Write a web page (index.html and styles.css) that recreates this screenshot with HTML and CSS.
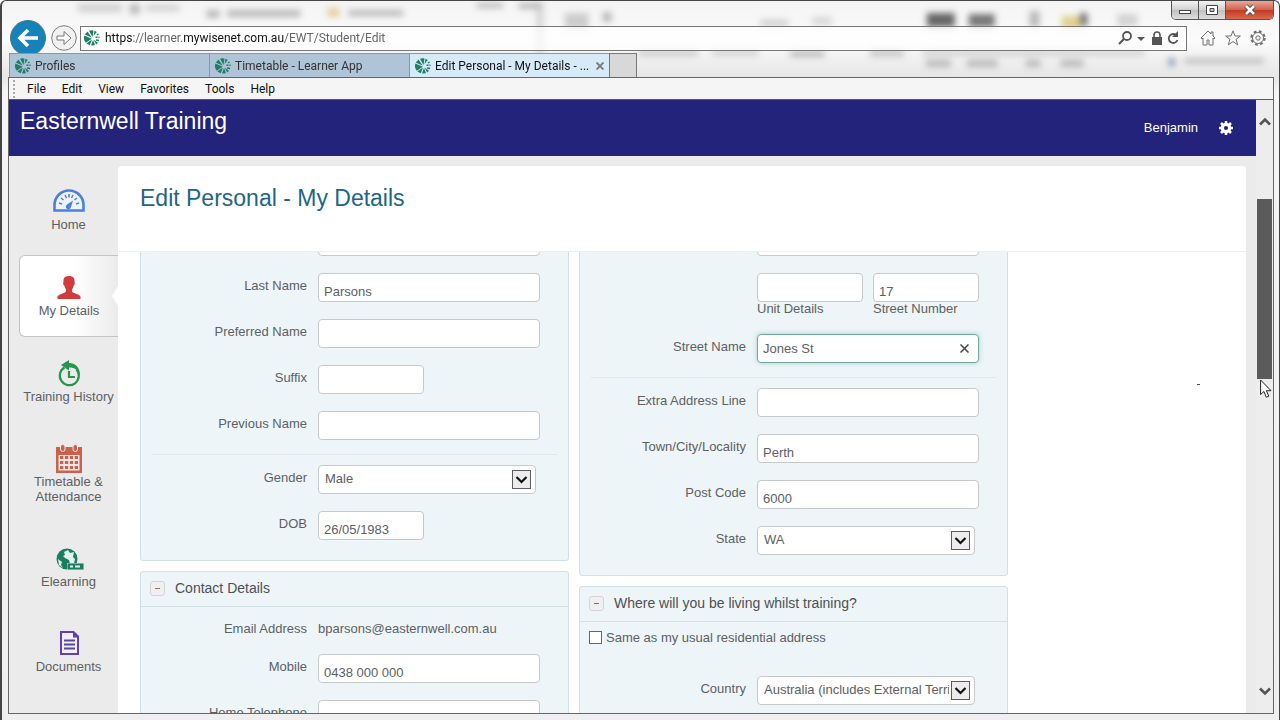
FILE: index.html
```html
<!DOCTYPE html>
<html lang="en">
    <head>
        <meta charset="UTF-8" />
        <meta name="viewport" content="width=device-width, initial-scale=1" />
        <title>Edit Personal - My Details - Learner App</title>
        <link rel="stylesheet" href="styles.css">
    </head>
    <body>
        <!-- Shared symbols -->
        <svg class="symbols" aria-hidden="true">
            <symbol id="favicon" viewBox="0 0 16 16">
                <path d="M5 .8A7.500 7.500 0 0 1 9.500.5L8.500 7zM3.500 1.500L7.800 7.800.8 4.500zM.4 5.500l7.400 3.200-6 4A7.500 7.500 0 0 1 .4 5.500zM2.300 13.500L8 9.500 5.800 15.300zM7 15.600L9 10l2 5.300zM12.200 14.600L9.500 9.500l4.500 3.300zM10.500 .8L9.500 6l3.300-4z" fill="#1d7f66" />
                <path d="M13 5l1.500-1M11.500 7.300h2M14.500 7.500l1-.5M12 10l3 .5" stroke="#1d7f66" stroke-width="1.500" />
            </symbol>
            <symbol id="chevron" viewBox="0 0 19 19">
                <rect x="0.500" y="0.500" width="18" height="18" fill="#ececec" stroke="#5c5c5c" />
                <path d="M4.500 7l5 5 5-5" fill="none" stroke="#111" stroke-width="2.200" />
            </symbol>
        </svg>

        <div class="window">
            <!-- Blurred desktop behind the glass frame -->
            <svg class="glass" viewBox="0 0 1280 77" preserveAspectRatio="none" aria-hidden="true">
                <defs>
                    <filter id="soft" x="-20%" y="-20%" width="140%" height="140%">
                        <feGaussianBlur stdDeviation="3" />
                    </filter>
                </defs>
                <g filter="url(#soft)" fill="#b9b9b9">
                    <rect x="76" y="3" width="44" height="8" opacity="0.600" />
                    <rect x="128" y="3" width="10" height="10" />
                    <rect x="144" y="4" width="34" height="6" opacity="0.600" />
                    <rect x="205" y="9" width="13" height="8" />
                    <rect x="226" y="9" width="73" height="7" />
                    <rect x="326" y="7" width="12" height="9" fill="#e5cfa0" />
                    <rect x="347" y="9" width="55" height="6" />
                    <rect x="476" y="2" width="26" height="5" />
                    <rect x="518" y="2" width="22" height="6" />
                    <rect x="535" y="0" width="8" height="52" opacity="0.500" />
                    <rect x="564" y="12" width="24" height="16" opacity="0.700" />
                    <rect x="602" y="11" width="9" height="10" />
                    <rect x="760" y="19" width="28" height="6" opacity="0.700" />
                    <rect x="812" y="16" width="20" height="8" opacity="0.500" />
                    <rect x="638" y="49" width="60" height="6" opacity="0.700" />
                    <rect x="712" y="49" width="46" height="5" opacity="0.700" />
                    <rect x="790" y="50" width="34" height="6" />
                    <rect x="870" y="48" width="34" height="8" opacity="0.700" />
                    <rect x="927" y="12" width="28" height="14" fill="#666" />
                    <rect x="969" y="13" width="26" height="13" fill="#777" />
                    <rect x="1030" y="10" width="10" height="16" />
                    <rect x="1062" y="15" width="20" height="13" fill="#ded28d" />
                    <rect x="1080" y="12" width="8" height="13" fill="#777" />
                    <rect x="1118" y="13" width="20" height="12" opacity="0.600" />
                    <rect x="923" y="50" width="222" height="4" opacity="0.800" />
                    <rect x="926" y="59" width="25" height="7" />
                    <rect x="967" y="59" width="31" height="7" />
                    <rect x="1026" y="59" width="15" height="7" />
                    <rect x="1061" y="59" width="23" height="7" />
                    <rect x="1169" y="57" width="7" height="8" fill="#8fa3bd" />
                    <rect x="1185" y="57" width="80" height="6" opacity="0.800" />
                </g>
            </svg>

            <div class="window-buttons">
                <button type="button" aria-label="Minimize">
                    <svg viewBox="0 0 16 12" width="16" height="12"><rect x="2.500" y="6.500" width="11" height="3" fill="#fff" stroke="#444" /></svg>
                </button>
                <button type="button" aria-label="Restore">
                    <svg viewBox="0 0 16 12" width="16" height="12"><path d="M2.500 1.500h11v9h-11zM6 4.500h4v3H6z" fill="#fff" fill-rule="evenodd" stroke="#444" /></svg>
                </button>
                <button type="button" class="close" aria-label="Close">
                    <svg viewBox="0 0 16 12" width="16" height="12"><path d="M4 2l8 8M12 2l-8 8" stroke="#444" stroke-width="4.500" /><path d="M4 2l8 8M12 2l-8 8" stroke="#fff" stroke-width="2.600" /></svg>
                </button>
            </div>

            <div class="nav-row">
                <button type="button" class="back" aria-label="Back">
                    <svg viewBox="0 0 36 36" width="36" height="36"><circle cx="18" cy="18" r="17.500" fill="#1682b8" stroke="#4b7890" /><path d="M28 18H11M18 10l-8 8 8 8" fill="none" stroke="#fff" stroke-width="3.600" /></svg>
                </button>
                <button type="button" class="forward" aria-label="Forward">
                    <svg viewBox="0 0 26 26" width="26" height="26"><circle cx="13" cy="13" r="12.300" fill="#f1f1f1" stroke="#7b7b7b" /><path d="M6 11h7V6.500l7 6.500-7 6.500V15H6z" fill="#fafafa" stroke="#777" /></svg>
                </button>
                <div class="address">
                    <svg width="16" height="16"><use href="#favicon" /></svg>
                    <div class="url" role="textbox" aria-label="Address"><b>https</b>://learner.<b>mywisenet.com.au</b>/EWT/Student/Edit</div>
                    <svg viewBox="0 0 62 16" width="62" height="16" fill="none" stroke="#555">
                        <circle cx="9" cy="6" r="4" stroke-width="1.800" />
                        <path d="M6 9l-5 5" stroke-width="2.200" />
                        <path d="M19 7h8l-4 4z" fill="#555" stroke="none" />
                        <path d="M34 7h10v8H34z" fill="#555" stroke="none" />
                        <path d="M36 8V5a3 3 0 0 1 6 0v3" stroke-width="1.600" />
                        <path d="M59 6a4.500 4.500 0 1 0 .5 4" stroke-width="1.800" />
                        <path d="M60 1v6h-6z" fill="#555" stroke="none" />
                    </svg>
                </div>
                <div class="tools">
                    <button type="button" aria-label="Home">
                        <svg viewBox="0 0 16 16" width="16" height="16"><path d="M1 8l7-7 3 3V2h2v4l2 2-1 1-1-1v7h-4v-5H7v5H3V8L2 9z" fill="#fafafa" stroke="#707070" /></svg>
                    </button>
                    <button type="button" aria-label="Favorites">
                        <svg viewBox="0 0 16 16" width="16" height="16"><path d="M8 .8l2 5.200h5.400l-4.300 3.300 1.600 5.500L8 11.600l-4.700 3.200 1.600-5.500L.6 6H6z" fill="#fafafa" stroke="#707070" /></svg>
                    </button>
                    <button type="button" aria-label="Settings">
                        <svg viewBox="0 0 16 16" width="16" height="16"><circle cx="8" cy="8" r="6.200" fill="none" stroke="#707070" stroke-width="3" stroke-dasharray="2.600 2.270" /><circle cx="8" cy="8" r="5.500" fill="#fafafa" stroke="#707070" /><circle cx="8" cy="8" r="2.200" fill="#eee" stroke="#707070" /></svg>
                    </button>
                </div>
            </div>

            <div class="tabs">
                <a href="#" class="tab"><svg width="16" height="16"><use href="#favicon" /></svg><span>Profiles</span></a>
                <a href="#" class="tab"><svg width="16" height="16"><use href="#favicon" /></svg><span>Timetable - Learner App</span></a>
                <a href="#" class="tab current">
                    <svg width="16" height="16"><use href="#favicon" /></svg><span>Edit Personal - My Details - ...</span>
                    <svg class="tab-close" viewBox="0 0 8 8" width="8" height="8"><path d="M.5 .5l7 7M7.500 .5l-7 7" stroke="#777" stroke-width="1.800" /></svg>
                </a>
                <button type="button" class="new-tab" aria-label="New tab"></button>
            </div>

            <div class="frame">
                <div class="menubar">
                    <a href="#">File</a>
                    <a href="#">Edit</a>
                    <a href="#">View</a>
                    <a href="#">Favorites</a>
                    <a href="#">Tools</a>
                    <a href="#">Help</a>
                </div>

                <div class="viewport">
                    <div class="page">
                        <header class="app-header">
                            <div class="brand">Easternwell Training</div>
                            <a href="#" class="user">Benjamin</a>
                            <button type="button" aria-label="Settings">
                                <svg viewBox="0 0 14 14" width="14" height="14"><circle cx="7" cy="7" r="3.700" fill="none" stroke="#fff" stroke-width="3.200" /><path d="M7 0v3M7 11v3M0 7h3M11 7h3M2 2l2 2M10 10l2 2M12 2l-2 2M4 10l-2 2" stroke="#fff" stroke-width="2.600" /></svg>
                            </button>
                        </header>

                        <div class="app-body">
                            <nav class="sidebar">
                                <a href="#" class="side-item">
                                    <svg viewBox="0 0 32 32" width="32" height="32"><path d="M1.500 25.500v-5.500a14.500 14.500 0 0 1 29 0v5.500z" fill="#edf2fb" stroke="#4b80dd" stroke-width="2.600" /><path d="M6 18l3 1M8 13l2.500 2M12 10l1.500 3M16 9v3.500M20 10l-1.500 3M24 13l-2.500 2M26 18l-3 1" stroke="#4b80dd" stroke-width="1.500" /><path d="M20 15.500l-2 6.500a2.600 2.600 0 1 1-4-2.500z" fill="#4b80dd" /></svg>
                                    Home
                                </a>
                                <a href="#" class="side-item active">
                                    <svg viewBox="0 0 32 32" width="32" height="32"><path d="M16 5c4 0 6 2 5.500 6 1 1 0 3-.8 3.500-.3 2-1.200 3-1.700 4v2c1 2 8.500 2.500 8.500 5.500v2h-23v-2C4.500 23 12 22.500 13 20.500v-2c-.5-1-1.400-2-1.700-4-.8-.5-1.800-2.500-.8-3.500C10 7 12 5 16 5z" fill="#d23b3e" /></svg>
                                    My Details
                                </a>
                                <a href="#" class="side-item">
                                    <svg viewBox="0 0 32 32" width="32" height="32" fill="none" stroke="#27964a"><path d="M11.500 10.500a9.500 9.500 0 1 0 12 2" stroke-width="2.200" /><path d="M8 8l8-5v3c6 0 11 4 11 12-2-5-5-7.500-11-7.500v3z" fill="#27964a" stroke="none" /><path d="M16 14v6h6" stroke-width="2.200" /></svg>
                                    Training History
                                </a>
                                <a href="#" class="side-item">
                                    <svg viewBox="0 0 32 32" width="32" height="32"><path d="M3 5h26v26H3z" fill="#c8624f" /><path d="M5.500 13h21v15.500h-21z" fill="#f0e9e7" /><path d="M7 15.500h18M7 20.500h18M7 25.500h18" stroke="#c8624f" stroke-width="3.200" stroke-dasharray="3.300 1.600" /><g fill="#c8624f" stroke="#ebebeb"><rect x="7.500" y="2.500" width="4.500" height="7" rx="2.200" /><rect x="20" y="2.500" width="4.500" height="7" rx="2.200" /></g></svg>
                                    Timetable &amp;<br>Attendance
                                </a>
                                <a href="#" class="side-item">
                                    <svg viewBox="0 0 32 32" width="32" height="32"><circle cx="14" cy="17" r="10.500" fill="#187e5f" /><path d="M11 10l4-2 2 3 4-1-1 5 2 2-1 5h-4l-1-4-4-2-2-2 2-1zM5 17l4 3-1 3 2 3-4-3z" fill="#e5efeb" /><rect x="14" y="21" width="17" height="7" fill="#ebebeb" /><rect x="15.200" y="22.200" width="14.600" height="4.600" fill="#187e5f" stroke="#187e5f" stroke-width="1.500" /><path d="M17 24.500h3M22 24.500h5" stroke="#e5efeb" stroke-width="2" /></svg>
                                    Elearning
                                </a>
                                <a href="#" class="side-item">
                                    <svg viewBox="0 0 32 32" width="32" height="32"><path d="M8 5h12.500l4.500 4.500V27H8z" fill="#f1eff6" stroke="#633fb0" stroke-width="2" /><path d="M20 4.500v6h6z" fill="#633fb0" /><path d="M11 13.500h11M11 17.500h11M11 21.500h11" stroke="#59469a" stroke-width="1.800" /></svg>
                                    Documents
                                </a>
                            </nav>

                            <main class="content">
                                <div class="content-header">
                                    <h1>Edit Personal - My Details</h1>
                                </div>
                                <form class="form-scroll">
                                    <div class="form-columns">
                                        <div class="column">
                                            <section class="panel">
                                                <div class="rows">
                                                    <div class="row"><span></span><input type="text" aria-label="Middle Name" /></div>
                                                    <div class="row"><label for="lastName">Last Name</label><input type="text" id="lastName" value="Parsons" /></div>
                                                    <div class="row"><label for="preferredName">Preferred Name</label><input type="text" id="preferredName" /></div>
                                                    <div class="row"><label for="suffix">Suffix</label><input type="text" id="suffix" class="short" /></div>
                                                    <div class="row"><label for="previousName">Previous Name</label><input type="text" id="previousName" /></div>
                                                </div>
                                                <div class="rows divided">
                                                    <div class="row">
                                                        <label for="gender">Gender</label>
                                                        <div class="select"><select id="gender"><option>Male</option></select><svg width="19" height="19"><use href="#chevron" /></svg></div>
                                                    </div>
                                                    <div class="row"><label for="dob">DOB</label><input type="text" id="dob" class="short" value="26/05/1983" /></div>
                                                </div>
                                            </section>
                                            <section class="panel">
                                                <h2><button type="button" class="toggle" aria-label="Collapse"></button>Contact Details</h2>
                                                <div class="rows">
                                                    <div class="row text-row"><span class="label">Email Address</span><span class="value">bparsons@easternwell.com.au</span></div>
                                                    <div class="row"><label for="mobile">Mobile</label><input type="text" id="mobile" value="0438 000 000" /></div>
                                                    <div class="row"><label for="homePhone">Home Telephone</label><input type="text" id="homePhone" /></div>
                                                </div>
                                            </section>
                                        </div>

                                        <div class="column">
                                            <section class="panel">
                                                <div class="rows">
                                                    <div class="row"><span></span><input type="text" aria-label="Building Name" /></div>
                                                    <div class="row">
                                                        <span></span>
                                                        <div class="pair">
                                                            <div><input type="text" id="unit" class="short" /><label for="unit">Unit Details</label></div>
                                                            <div><input type="text" id="streetNumber" class="short" value="17" /><label for="streetNumber">Street Number</label></div>
                                                        </div>
                                                    </div>
                                                    <div class="row">
                                                        <label for="streetName">Street Name</label>
                                                        <div class="focused">
                                                            <input type="text" id="streetName" value="Jones St" />
                                                            <button type="button" aria-label="Clear"><svg viewBox="0 0 9 9" width="9" height="9"><path d="M.5 .5l8 8M8.500 .5l-8 8" stroke="#444" stroke-width="1.500" /></svg></button>
                                                        </div>
                                                    </div>
                                                </div>
                                                <div class="rows divided">
                                                    <div class="row"><label for="extraAddress">Extra Address Line</label><input type="text" id="extraAddress" /></div>
                                                    <div class="row"><label for="town">Town/City/Locality</label><input type="text" id="town" value="Perth" /></div>
                                                    <div class="row"><label for="postCode">Post Code</label><input type="text" id="postCode" value="6000" /></div>
                                                    <div class="row">
                                                        <label for="state">State</label>
                                                        <div class="select"><select id="state"><option>WA</option></select><svg width="19" height="19"><use href="#chevron" /></svg></div>
                                                    </div>
                                                </div>
                                            </section>
                                            <section class="panel">
                                                <h2><button type="button" class="toggle" aria-label="Collapse"></button>Where will you be living whilst training?</h2>
                                                <div class="check-row">
                                                    <input type="checkbox" id="sameAddress" />
                                                    <label for="sameAddress">Same as my usual residential address</label>
                                                </div>
                                                <div class="rows">
                                                    <div class="row">
                                                        <label for="country">Country</label>
                                                        <div class="select"><select id="country"><option>Australia (includes External Territories)</option></select><svg width="19" height="19"><use href="#chevron" /></svg></div>
                                                    </div>
                                                </div>
                                            </section>
                                        </div>
                                    </div>
                                </form>
                                <span class="speck"></span>
                            </main>
                        </div>
                    </div>

                    <div class="scrollbar">
                        <svg viewBox="0 0 12 9" width="12" height="9"><path d="M1 7.500l5-5 5 5" fill="none" stroke="#555" stroke-width="2.600" /></svg>
                        <div class="track">
                            <div class="thumb">
                                <svg class="cursor" viewBox="0 0 12 20" width="12" height="20"><path d="M.6 1v14.500l3.300-3 2.400 5.700 2.500-1-2.400-5.500h4.600z" fill="#fff" stroke="#222" /></svg>
                            </div>
                        </div>
                        <svg viewBox="0 0 12 9" width="12" height="9"><path d="M1 1.500l5 5 5-5" fill="none" stroke="#555" stroke-width="2.600" /></svg>
                    </div>
                </div>
            </div>
        </div>
    </body>
</html>
```
FILE: styles.css
```css
* {
    box-sizing: border-box;
    margin: 0;
    padding: 0;
}
body {
    font-family: "Liberation Sans", Arial, sans-serif;
    font-size: 13px;
    line-height: 15px;
    color: #5d6063;
    overflow: hidden;
}
a {
    color: inherit;
    text-decoration: none;
}
button {
    border: none;
    background: none;
    cursor: pointer;
}
svg {
    display: block;
    flex: none;
}
.symbols {
    position: absolute;
    width: 0;
    height: 0;
}

/* Browser window */
.window {
    position: relative;
    display: flex;
    flex-direction: column;
    height: 100vh;
    padding: 0 5px 6px 6px;
    border: 1px solid #444;
    border-width: 1px 1px 0 2px;
    border-radius: 6px 6px 0 0;
    background: linear-gradient(#f4f4f4, #fbfbfb 40px, #e6e6e6 76px, #f5f5f5 90px, #efefef);
}
.glass {
    position: absolute;
    top: 0;
    left: 0;
    width: 100%;
    height: 77px;
}
.window-buttons {
    position: absolute;
    top: 0;
    right: 5px;
    display: flex;
    border: 1px solid #555;
    border-top: none;
    border-radius: 0 0 5px 5px;
    overflow: hidden;
}
.window-buttons button {
    display: flex;
    align-items: center;
    justify-content: center;
    width: 27px;
    height: 18px;
    border-right: 1px solid #555;
    background: linear-gradient(#f3f3f3, #cfcfcf 50%, #c0c0c0 50%, #dedede);
}
.window-buttons .close {
    width: 47px;
    border: none;
    background: linear-gradient(#e9a699, #d1604c 50%, #c03a22 50%, #d9684f);
}
.nav-row {
    position: relative;
    display: flex;
    align-items: center;
    height: 36px;
    margin-top: 19px;
    padding-left: 2px;
}
.forward {
    margin: 0 3px 0 5px;
}
.address {
    flex: 1;
    display: flex;
    align-items: center;
    gap: 5px;
    height: 25px;
    padding: 0 6px 0 3px;
    border: 1px solid #777;
    background: rgba(255, 255, 255, 0.7);
}
.url,
.tabs,
.menubar {
    font: 12px/16px Roboto, "Noto Sans", sans-serif;
}
.url {
    flex: 1;
    color: #666;
}
.url b {
    font-weight: 400;
    color: #111;
}
.tools {
    display: flex;
    gap: 9px;
    margin: 0 8px 0 13px;
}
.tabs {
    position: relative;
    display: flex;
    height: 24px;
    margin: -3px 0 0 1px;
    color: #333;
}
.tab {
    display: flex;
    align-items: center;
    gap: 4px;
    width: 200px;
    padding: 0 5px;
    border: 1px solid #8b97a1;
    border-width: 1px 0 0 1px;
    background: #afc4d6;
    white-space: nowrap;
}
.tab.current {
    background: #d7eaf8;
    color: #111;
}
.tab-close {
    margin-left: auto;
}
.new-tab {
    width: 28px;
    border: 1px solid #777;
    border-bottom: none;
    background: #d8d8d8;
}
.frame {
    flex: 1;
    display: flex;
    flex-direction: column;
    min-height: 0;
    position: relative;
    border: 1px solid #666;
}
.menubar {
    display: flex;
    align-items: center;
    gap: 16px;
    height: 22px;
    padding-left: 4px;
    border-bottom: 1px solid #55576a;
    background: #f5f5f5;
    color: #111;
}
.menubar::before {
    content: "";
    height: 18px;
    margin-right: -4px;
    border-left: 2px dotted #aaa;
}
.viewport {
    flex: 1;
    display: flex;
    min-height: 0;
}
.page {
    flex: 1;
    display: flex;
    flex-direction: column;
    min-width: 0;
}

/* App header */
.app-header {
    display: flex;
    align-items: center;
    flex: none;
    height: 56px;
    padding: 0 23px 1px 11px;
    background: #24237b;
    color: #fff;
}
.brand {
    align-self: flex-start;
    margin-right: auto;
    padding-top: 7px;
    font-size: 23px;
    line-height: 28px;
}
.user {
    margin-right: 21px;
}

/* Sidebar */
.app-body {
    flex: 1;
    display: flex;
    min-height: 0;
    padding-right: 10px;
    background: #ebebeb;
}
.sidebar {
    display: flex;
    flex-direction: column;
    gap: 5px;
    flex: none;
    width: 109px;
    padding: 14px 0 0 10px;
    text-align: center;
}
.side-item {
    position: relative;
    padding: 15px 0 18px;
    white-space: nowrap;
}
.side-item svg {
    margin: 0 auto;
}
.side-item.active {
    border: 1px solid #c4c4c4;
    border-right: none;
    border-radius: 6px 0 0 6px;
    background: linear-gradient(to right, #fff 55%, #ebebeb);
}
.side-item.active::after {
    content: "";
    position: absolute;
    top: 30px;
    right: 0;
    border: 10px solid transparent;
    border-width: 10px 6px 10px 0;
    border-right-color: #fff;
}

/* Main content */
.content {
    position: relative;
    flex: 1;
    display: flex;
    flex-direction: column;
    min-width: 0;
    margin-top: 10px;
    border-radius: 4px 4px 0 0;
    background: #fff;
}
.content-header {
    flex: none;
    height: 86px;
    padding: 18px 22px 0;
    border-bottom: 1px solid #efefef;
}
h1 {
    font-size: 23px;
    font-weight: 400;
    line-height: 28px;
    color: #1f6686;
}
.form-scroll {
    flex: 1;
    overflow: hidden;
    padding-left: 22px;
}
.form-columns {
    display: flex;
    gap: 10px;
    margin-top: -36px; /* scrolled part of the form */
}
.column {
    display: flex;
    flex-direction: column;
    gap: 10px;
    width: 429px;
}
.panel {
    padding-bottom: 20px;
    border: 1px solid #cfe0e6;
    border-radius: 3px;
    background: #edf5f9;
}
h2 {
    display: flex;
    align-items: center;
    gap: 10px;
    height: 35px;
    padding: 0 9px 1px;
    border-bottom: 1px solid #d3e1e7;
    font-size: 14px;
    font-weight: 400;
    color: #4d5053;
}
.toggle {
    width: 15px;
    height: 15px;
    border: 1px solid #d5d5d5;
    border-radius: 3px;
    background: #f1efef;
}
.toggle::before {
    content: "";
    display: block;
    width: 5px;
    height: 1px;
    margin: 0 auto;
    background: #8a7575;
}
.rows {
    display: flex;
    flex-direction: column;
    gap: 17px;
    padding-top: 10px;
}
.rows.divided {
    margin: 14px 11px 0;
    border-top: 1px solid #dce9ee;
}
.row {
    display: grid;
    grid-template-columns: 166px 1fr;
    column-gap: 11px;
    align-items: start;
}
.divided .row {
    grid-template-columns: 155px 1fr;
}
.row > label {
    padding-top: 5px;
    text-align: right;
}
.text-row {
    height: 20px;
    padding-top: 4px;
}
.label {
    text-align: right;
}
input[type="text"],
select {
    display: block;
    width: 222px;
    height: 29px;
    padding: 8px 5px 0;
    border: 1px solid #c6c9cc;
    border-radius: 4px;
    background: #fff;
    color: #5d6063;
    font: 13px "Liberation Sans", Arial, sans-serif;
    outline: none;
}
input.short {
    width: 106px;
}
.select {
    position: relative;
    width: 218px;
}
.select select {
    width: 100%;
    padding: 0 25px 2px 6px;
    appearance: none;
}
.select svg {
    position: absolute;
    top: 5px;
    right: 5px;
    pointer-events: none;
}
.pair {
    display: flex;
    gap: 10px;
    height: 44px;
}
.pair label {
    display: block;
    line-height: 14px;
}
.focused {
    position: relative;
    width: 222px;
}
.focused input[type="text"] {
    padding: 0 24px 0 5px;
    border-color: #6fa99a;
    box-shadow: 0 0 5px rgba(70, 150, 125, 0.4);
}
.focused button {
    position: absolute;
    top: 10px;
    right: 10px;
}
.check-row {
    display: flex;
    align-items: center;
    gap: 4px;
    height: 44px;
    padding: 0 0 14px 9px;
}
input[type="checkbox"] {
    width: 13px;
    height: 13px;
    border: 1px solid #666;
    background: #fff;
    appearance: none;
}
.speck {
    position: absolute;
    top: 218px;
    right: 46px;
    width: 3px;
    height: 1px;
    background: #555;
}

/* Scrollbar */
.scrollbar {
    display: flex;
    flex-direction: column;
    align-items: center;
    width: 17px;
    padding: 17px 0;
    background: #ededed;
}
.track {
    flex: 1;
    padding-top: 73px;
}
.thumb {
    position: relative;
    width: 15px;
    height: 180px;
    background: #5b5b5b;
}
.cursor {
    position: absolute;
    top: 180px;
    left: 3px;
}
```
